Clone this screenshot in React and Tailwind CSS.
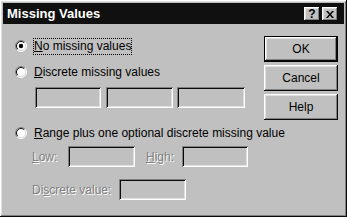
// Win95-style "Missing Values" dialog
const raised =
  'shadow-[inset_-1px_-1px_#0a0a0a,inset_1px_1px_#ffffff,inset_-2px_-2px_#808080,inset_2px_2px_#dfdfdf]';
const sunken =
  'shadow-[inset_1px_1px_#808080,inset_-1px_-1px_#ffffff,inset_2px_2px_#0a0a0a,inset_-2px_-2px_#dfdfdf]';

function Radio({ checked }) {
  return (
    <svg width="12" height="12" viewBox="0 0 12 12" className="shrink-0">
      <circle cx="6" cy="6" r="5" fill="#fff" />
      <path d="M2.1 9.9A5.5 5.5 0 0 1 9.9 2.1" stroke="#808080" fill="none" />
      <path d="M9.9 2.1A5.5 5.5 0 0 1 2.1 9.9" stroke="#fff" fill="none" />
      <path d="M2.8 9.2A4.5 4.5 0 0 1 9.2 2.8" stroke="#0a0a0a" fill="none" />
      <path d="M9.2 2.8A4.5 4.5 0 0 1 2.8 9.2" stroke="#dfdfdf" fill="none" />
      {checked && <circle cx="6" cy="6" r="2.2" fill="#000" />}
    </svg>
  );
}

function RadioRow({ checked, focused, children }) {
  return (
    <div className="flex items-center h-[20px]">
      <Radio checked={checked} />
      <span
        className={`ml-[6px] leading-[15px] whitespace-nowrap border border-dotted ${
          focused ? 'border-black' : 'border-transparent'
        }`}
      >
        {children}
      </span>
    </div>
  );
}

function Field({ w }) {
  return <div className={`h-[21px] shrink-0 bg-[#c0c0c0] ${sunken} ${w}`} />;
}

function Disabled({ children, className = '' }) {
  return (
    <span className={`shrink-0 whitespace-nowrap text-[#808080] [text-shadow:1px_1px_0_#ffffff] ${className}`}>
      {children}
    </span>
  );
}

function Button({ children, isDefault }) {
  return (
    <div className={`h-[26px] w-[74px] ${isDefault ? 'border border-black' : ''}`}>
      <div className={`h-full w-full bg-[#c0c0c0] flex items-center justify-center ${raised}`}>
        {children}
      </div>
    </div>
  );
}

function TitleButton({ children }) {
  return (
    <div className={`w-[16px] h-[14px] bg-[#c0c0c0] flex items-center justify-center ${raised}`}>
      {children}
    </div>
  );
}

export default function App() {
  return (
    <div className="w-[347px] h-[217px] font-['Liberation_Sans',Arial,sans-serif] text-[12px] text-black">
      <div className={`w-full h-full bg-[#c0c0c0] p-[3px] flex flex-col ${raised}`}>
        {/* title bar */}
        <div className="h-[21px] bg-[#101010] flex items-center pl-[4px] pr-[6px]">
          <span className="text-white font-bold text-[13px] leading-none">Missing Values</span>
          <div className="ml-auto flex items-center gap-[2px] mt-[1px]">
            <TitleButton>
              <span className="font-bold text-[12px] leading-none text-black">?</span>
            </TitleButton>
            <TitleButton>
              <svg width="8" height="7" viewBox="0 0 8 7">
                <path d="M0 0L2 0L4 2.5L6 0L8 0L5 3.5L8 7L6 7L4 4.5L2 7L0 7L3 3.5Z" fill="#000" />
              </svg>
            </TitleButton>
          </div>
        </div>

        {/* body */}
        <div className="flex flex-1">
          <div className="flex flex-col flex-1 min-w-0 pl-[12px] pt-[12px]">
            <RadioRow checked focused>
              <u>N</u>o missing values
            </RadioRow>
            <div className="mt-[6px]">
              <RadioRow>
                <u>D</u>iscrete missing values
              </RadioRow>
            </div>
            <div className="flex mt-[5px] ml-[20px]">
              <Field w="w-[66px]" />
              <div className="ml-[5px]">
                <Field w="w-[67px]" />
              </div>
              <div className="ml-[4px]">
                <Field w="w-[68px]" />
              </div>
            </div>
            <div className="mt-[15px]">
              <RadioRow>
                <u>R</u>ange plus one optional discrete missing value
              </RadioRow>
            </div>
            <div className="flex items-center mt-[3px] ml-[17px]">
              <Disabled className="w-[36px]">
                <u>L</u>ow:
              </Disabled>
              <Field w="w-[67px]" />
              <Disabled className="ml-[11px] w-[36px]">
                <u>H</u>igh:
              </Disabled>
              <Field w="w-[66px]" />
            </div>
            <div className="flex items-center mt-[12px] ml-[17px]">
              <Disabled className="w-[87px]">
                Di<u>s</u>crete value:
              </Disabled>
              <Field w="w-[67px]" />
            </div>
          </div>

          <div className="shrink-0 pr-[6px] pt-[12px] flex flex-col gap-[3px]">
            <Button isDefault>OK</Button>
            <Button>Cancel</Button>
            <Button>Help</Button>
          </div>
        </div>
      </div>
    </div>
  );
}
